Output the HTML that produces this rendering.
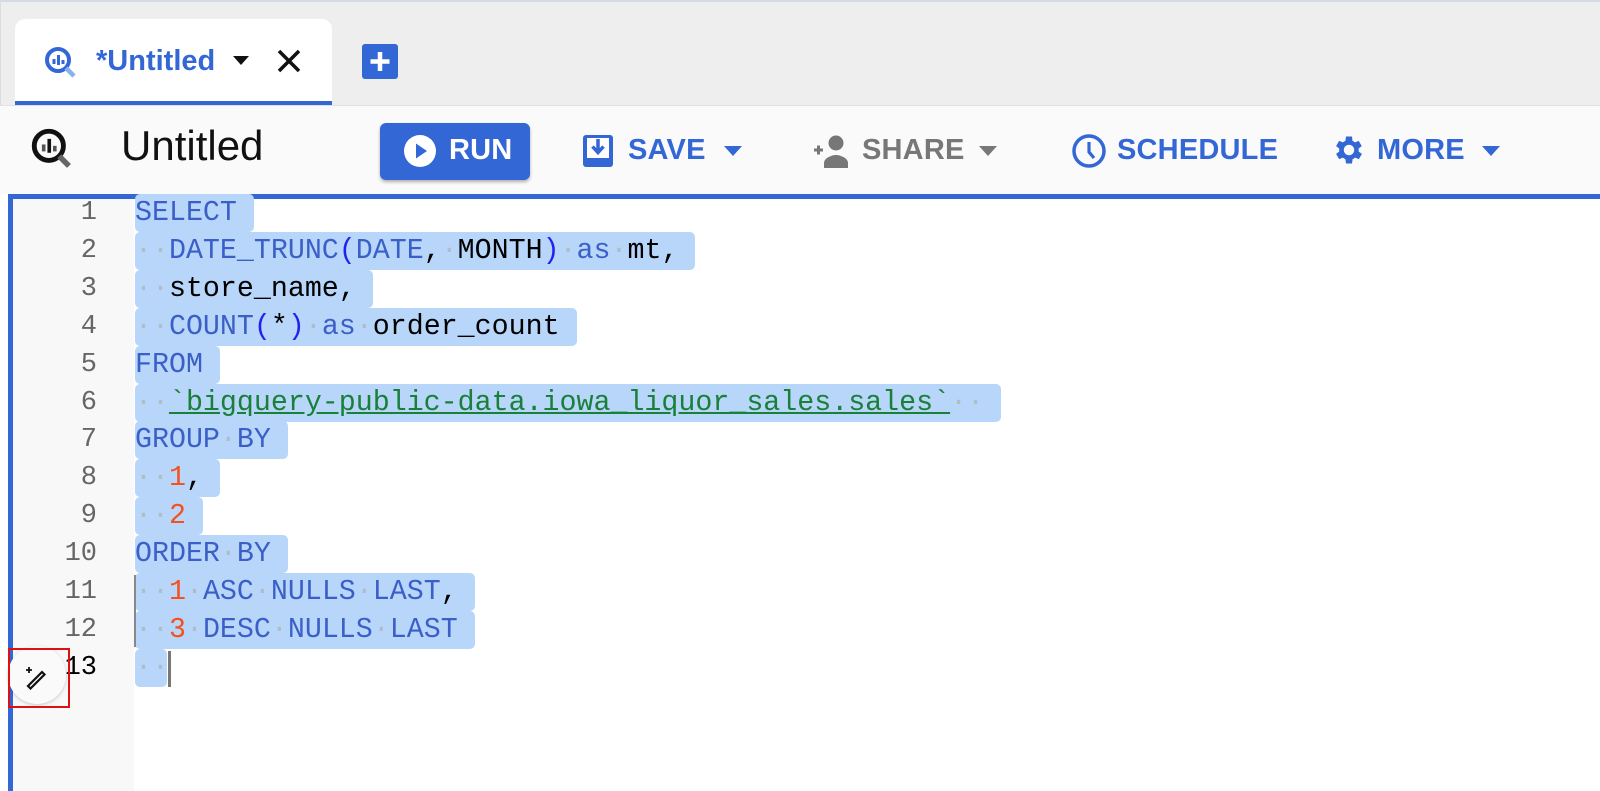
<!DOCTYPE html>
<html><head><meta charset="utf-8"><style>
*{margin:0;padding:0;box-sizing:border-box}
body{width:1600px;height:791px;overflow:hidden;background:#fff;font-family:"Liberation Sans",sans-serif;position:relative}
.tabbar{position:absolute;left:0;top:0;width:1600px;height:105px;background:#eeeeee;border-top:2px solid #d4dbe6;border-left:1px solid #ddd}
.tab{position:absolute;left:15px;top:19px;width:317px;height:86px;background:#fff;border-radius:10px 10px 0 0;border-bottom:4px solid #3367d6}
.toolbar{position:absolute;left:0;top:105px;width:1600px;height:89px;background:#fafafa;border-top:1px solid #e0e0e0}
.btxt{position:absolute;font-size:29px;font-weight:bold;top:134px;letter-spacing:0.2px}
.editor{position:absolute;left:8px;top:194px;width:1592px;height:597px;border-top:5px solid #3367d6;border-left:5px solid #3367d6;background:#fff}
.gutter{position:absolute;left:13px;top:199px;width:121px;height:592px;background:#f8f8f8}
.ln{position:absolute;left:13px;width:84px;text-align:right;font-family:"Liberation Mono",monospace;font-size:27px;color:#666;height:38px;line-height:38px}
.cl{position:absolute;left:135px;height:38px;line-height:38px;font-family:"Liberation Mono",monospace;font-size:28.3px;white-space:pre;color:#000}
.sel{background:#b7d6f9;padding-right:17px;border-radius:5px;display:inline-block;height:38px}
.k{color:#3b5fc8}.p{color:#2222ee}.n{color:#f4511e}.s{color:#188038;text-decoration:underline;text-decoration-color:#188038}.d{color:#b0bcc8}
</style></head><body>
<div class="tabbar"></div>
<div class="tab"></div>
<svg style="position:absolute;left:43px;top:45px" width="36" height="36" viewBox="0 0 36 36"><circle cx="15" cy="15" r="11" fill="none" stroke="#3367d6" stroke-width="4"/><path d="M23 23l8 8" stroke="#8ab0f0" stroke-width="4.5"/><rect x="14" y="10" width="3" height="10" fill="#3367d6"/><rect x="9.5" y="14" width="3" height="5" fill="#3367d6"/><rect x="18.5" y="15" width="3" height="4" fill="#3367d6"/></svg>
<div style="position:absolute;left:96px;top:45px;font-size:29px;font-weight:bold;color:#3367d6">*Untitled</div>
<svg style="position:absolute;left:233px;top:56px" width="16" height="10"><path d="M0 0h16L8 9z" fill="#111"/></svg>
<svg style="position:absolute;left:276px;top:48px" width="26" height="26"><path d="M3 3L23 23M23 3L3 23" stroke="#111" stroke-width="3.5"/></svg>
<div style="position:absolute;left:362px;top:44px;width:36px;height:35px;background:#3367d6;border-radius:3px"></div>
<svg style="position:absolute;left:362px;top:44px" width="36" height="35"><path d="M18 8v19M8.5 17.5h19" stroke="#fff" stroke-width="4.5"/></svg>
<div class="toolbar"></div>
<svg style="position:absolute;left:28px;top:125px" width="50" height="50" viewBox="0 0 36 36"><circle cx="15" cy="15" r="10.5" fill="none" stroke="#111" stroke-width="3.5"/><path d="M22.5 22.5l7 7" stroke="#666" stroke-width="4"/><rect x="14" y="10" width="2.6" height="10" fill="#111"/><rect x="10" y="14" width="2.6" height="5" fill="#555"/><rect x="18" y="15" width="2.6" height="4" fill="#555"/></svg>
<div style="position:absolute;left:121px;top:122px;font-size:42px;color:#111">Untitled</div>
<div style="position:absolute;left:380px;top:123px;width:150px;height:57px;background:#3367d6;border-radius:6px;box-shadow:0 2px 3px rgba(0,0,0,.3)"></div>
<svg style="position:absolute;left:403px;top:134px" width="34" height="34"><circle cx="17" cy="17" r="16" fill="#fff"/><path d="M13 9.5v15l11-7.5z" fill="#3367d6"/></svg>
<div class="btxt" style="left:449px;color:#fff">RUN</div>
<svg style="position:absolute;left:582px;top:133px" width="32" height="36"><rect x="1" y="2" width="30" height="32" rx="3" fill="#3367d6"/><rect x="5" y="5" width="22" height="20" fill="#fff"/><path d="M16 6v13M10.5 13.5l5.5 6 5.5-6" stroke="#3367d6" stroke-width="3.5" fill="none"/></svg>
<div class="btxt" style="left:628px;color:#3367d6">SAVE</div>
<svg style="position:absolute;left:724px;top:146px" width="18" height="10"><path d="M0 0h18L9 10z" fill="#3367d6"/></svg>
<svg style="position:absolute;left:812px;top:134px" width="40" height="34"><path d="M2 16h9M6.5 11.5v9" stroke="#777" stroke-width="3"/><circle cx="24" cy="9" r="7.5" fill="#777"/><path d="M12 34v-5c0-5 8-8 12-8s12 3 12 8v5z" fill="#777"/></svg>
<div class="btxt" style="left:862px;color:#777">SHARE</div>
<svg style="position:absolute;left:979px;top:146px" width="18" height="10"><path d="M0 0h18L9 10z" fill="#777"/></svg>
<svg style="position:absolute;left:1071px;top:133px" width="36" height="36"><circle cx="18" cy="18" r="15" fill="none" stroke="#3367d6" stroke-width="3.5"/><path d="M18 9v10l5 6" stroke="#3367d6" stroke-width="3.2" fill="none"/></svg>
<div class="btxt" style="left:1117px;color:#3367d6">SCHEDULE</div>
<svg style="position:absolute;left:1331px;top:132px" width="36" height="36" viewBox="0 0 24 24"><path fill="#3367d6" d="M19.4 13a7.5 7.5 0 0 0 0-2l2.1-1.6-2-3.5-2.5 1a7 7 0 0 0-1.7-1L15 3h-4l-.4 2.9a7 7 0 0 0-1.7 1l-2.5-1-2 3.5L6.5 11a7.5 7.5 0 0 0 0 2l-2.1 1.6 2 3.5 2.5-1a7 7 0 0 0 1.700 1L11 21h4l.4-2.9a7 7 0 0 0 1.7-1l2.5 1 2-3.5zM13 15.5a3.5 3.5 0 1 1 0-7 3.5 3.5 0 0 1 0 7z" transform="translate(-1 0)"/></svg>
<div class="btxt" style="left:1377px;color:#3367d6">MORE</div>
<svg style="position:absolute;left:1482px;top:146px" width="18" height="10"><path d="M0 0h18L9 10z" fill="#3367d6"/></svg>
<div class="editor"></div>
<div class="gutter"></div>
<div class="ln" style="top:194px">1</div>
<div class="ln" style="top:232px">2</div>
<div class="ln" style="top:270px">3</div>
<div class="ln" style="top:308px">4</div>
<div class="ln" style="top:346px">5</div>
<div class="ln" style="top:384px">6</div>
<div class="ln" style="top:421px">7</div>
<div class="ln" style="top:459px">8</div>
<div class="ln" style="top:497px">9</div>
<div class="ln" style="top:535px">10</div>
<div class="ln" style="top:573px">11</div>
<div class="ln" style="top:611px">12</div>
<div class="ln" style="top:649px;color:#000">13</div>
<div class="cl" style="top:194px"><span class="sel"><span class="k">SELECT</span></span></div>
<div class="cl" style="top:232px"><span class="sel"><span class="d">··</span><span class="k">DATE_TRUNC</span><span class="p">(</span><span class="k">DATE</span>,<span class="d">·</span>MONTH<span class="p">)</span><span class="d">·</span><span class="k">as</span><span class="d">·</span>mt,</span></div>
<div class="cl" style="top:270px"><span class="sel"><span class="d">··</span>store_name,</span></div>
<div class="cl" style="top:308px"><span class="sel"><span class="d">··</span><span class="k">COUNT</span><span class="p">(</span>*<span class="p">)</span><span class="d">·</span><span class="k">as</span><span class="d">·</span>order_count</span></div>
<div class="cl" style="top:346px"><span class="sel"><span class="k">FROM</span></span></div>
<div class="cl" style="top:384px"><span class="sel"><span class="d">··</span><span class="s">`bigquery-public-data.iowa_liquor_sales.sales`</span><span class="d">··</span></span></div>
<div class="cl" style="top:421px"><span class="sel"><span class="k">GROUP</span><span class="d">·</span><span class="k">BY</span></span></div>
<div class="cl" style="top:459px"><span class="sel"><span class="d">··</span><span class="n">1</span>,</span></div>
<div class="cl" style="top:497px"><span class="sel"><span class="d">··</span><span class="n">2</span></span></div>
<div class="cl" style="top:535px"><span class="sel"><span class="k">ORDER</span><span class="d">·</span><span class="k">BY</span></span></div>
<div class="cl" style="top:573px"><span class="sel"><span class="d">··</span><span class="n">1</span><span class="d">·</span><span class="k">ASC</span><span class="d">·</span><span class="k">NULLS</span><span class="d">·</span><span class="k">LAST</span>,</span></div>
<div class="cl" style="top:611px"><span class="sel"><span class="d">··</span><span class="n">3</span><span class="d">·</span><span class="k">DESC</span><span class="d">·</span><span class="k">NULLS</span><span class="d">·</span><span class="k">LAST</span></span></div>
<div class="cl" style="top:649px"><span class="sel" style="padding-right:0;width:32px"><span class="d">··</span></span></div>
<div style="position:absolute;left:134px;top:575px;width:2px;height:72px;background:#888"></div>
<div style="position:absolute;left:168px;top:651px;width:3px;height:36px;background:#777"></div>
<div style="position:absolute;left:8px;top:646px;width:58px;height:58px;border-radius:50%;background:#fafafa;box-shadow:0 1px 3px rgba(0,0,0,.2)"></div>
<div style="position:absolute;left:8px;top:648px;width:62px;height:60px;border:2.5px solid #e01010"></div>
<svg style="position:absolute;left:22px;top:664px" width="28" height="26"><path d="M6 22L20 8l2.5 2.5L8.5 24.5z" fill="none" stroke="#111" stroke-width="2.2"/><path d="M7 3v6M4 6h6" stroke="#111" stroke-width="1.8"/></svg>
</body></html>
